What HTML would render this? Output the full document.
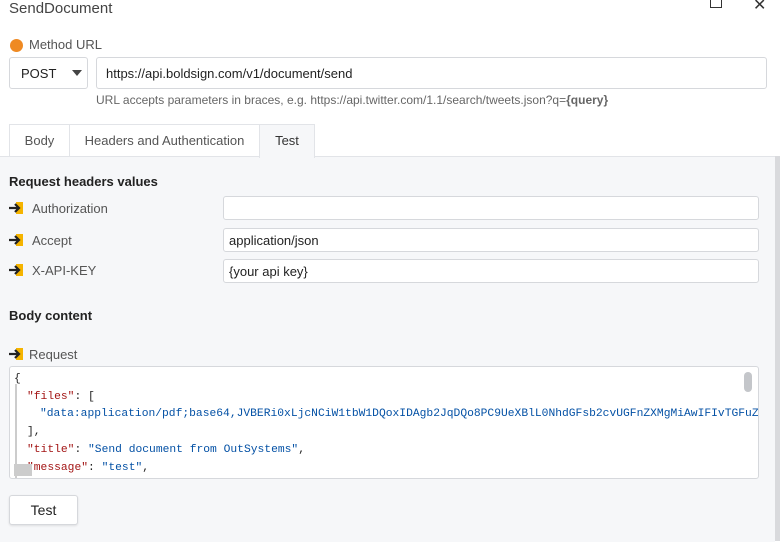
<!DOCTYPE html>
<html><head><style>
body{margin:0;width:780px;height:541px;background:#fff;font-family:"Liberation Sans",sans-serif;position:relative;overflow:hidden;color:#333}
.a{position:absolute}
.inp{position:absolute;background:#fff;border:1px solid #d6d8dc;border-radius:3px;box-sizing:border-box;font-size:13px;color:#222}
.ic{position:absolute;width:16px;height:14px}
.lbl{position:absolute;font-size:13px;color:#555}
.mono{font-family:"Liberation Mono",monospace;font-size:11.3px;position:absolute;white-space:nowrap;color:#222}
.k{color:#a31515}.s{color:#0451a5}
</style></head><body>
<div class="a" style="left:9px;top:0;font-size:15px;color:#444">SendDocument</div>
<div class="a" style="left:710px;top:-4px;width:10px;height:11px;border:1px solid #333;border-top:none"></div>
<div class="a" style="left:753px;top:-5px;font-size:16px;color:#333">✕</div>
<div class="a" style="left:10px;top:39px;width:13px;height:13px;border-radius:50%;background:#ef8a23"></div>
<div class="lbl" style="left:29px;top:37px;font-size:13px">Method URL</div>
<div class="inp" style="left:9px;top:57px;width:79px;height:32px;padding:8px 11px">POST<span style="position:absolute;left:62px;top:12px;border:5px solid transparent;border-top:6px solid #444;border-bottom:none"></span></div>
<div class="inp" style="left:96px;top:57px;width:671px;height:32px;padding:8px 9px">https://api.boldsign.com/v1/document/send</div>
<div class="a" style="left:96px;top:93px;font-size:12px;color:#666">URL accepts parameters in braces, e.g. https://api.twitter.com/1.1/search/tweets.json?q=<b>{query}</b></div>
<div class="a" style="left:0;top:156px;width:775px;height:385px;background:#f6f7f9;border-top:1px solid #e2e4e8"></div>
<div class="a" style="left:775px;top:156px;width:5px;height:385px;background:#d9dadd"></div>
<div class="a" style="left:9px;top:124px;width:61px;height:32px;border:1px solid #e2e4e8;border-bottom:none;box-sizing:border-box;font-size:13px;color:#555;text-align:center;line-height:32px;background:#fff">Body</div>
<div class="a" style="left:70px;top:124px;width:190px;height:32px;border:1px solid #e2e4e8;border-left:none;border-bottom:none;box-sizing:border-box;font-size:13px;color:#555;text-align:center;line-height:32px;background:#fff">Headers and Authentication</div>
<div class="a" style="left:259px;top:124px;width:56px;height:34px;border:1px solid #e2e4e8;border-bottom:none;box-sizing:border-box;font-size:13px;color:#333;text-align:center;line-height:32px;background:#f6f7f9">Test</div>
<div class="a" style="left:9px;top:174px;font-size:13px;font-weight:bold;color:#222">Request headers values</div>
<svg width="0" height="0" style="position:absolute"><defs><symbol id="ar" viewBox="0 0 16 14"><rect x="8" y="1" width="7" height="12" fill="#f5b400"/><path d="M1 7h10M7 3l4 4-4 4" stroke="#222" stroke-width="2.2" fill="none"/></symbol></defs></svg>
<svg class="ic" style="left:8px;top:201px"><use href="#ar"/></svg>
<div class="lbl" style="left:32px;top:201px">Authorization</div>
<div class="inp" style="left:223px;top:196px;width:536px;height:24px"></div>
<svg class="ic" style="left:8px;top:233px"><use href="#ar"/></svg>
<div class="lbl" style="left:32px;top:233px">Accept</div>
<div class="inp" style="left:223px;top:228px;width:536px;height:24px;padding:4px 5px">application/json</div>
<svg class="ic" style="left:8px;top:263px"><use href="#ar"/></svg>
<div class="lbl" style="left:32px;top:263px">X-API-KEY</div>
<div class="inp" style="left:223px;top:259px;width:536px;height:24px;padding:4px 5px">{your api key}</div>
<div class="a" style="left:9px;top:308px;font-size:13px;font-weight:bold;color:#222">Body content</div>
<svg class="ic" style="left:8px;top:347px"><use href="#ar"/></svg>
<div class="lbl" style="left:29px;top:347px">Request</div>
<div class="inp" style="left:9px;top:366px;width:750px;height:113px;overflow:hidden">
<div class="a" style="left:734px;top:5px;width:8px;height:20px;border-radius:4px;background:#c4c6ca"></div>
<div class="a" style="left:5px;top:17px;width:2px;height:95px;background:#ccc"></div>
<div class="mono" style="left:4px;top:6px">{</div>
<div class="mono" style="left:17px;top:24px"><span class="k">"files"</span>: [</div>
<div class="mono" style="left:30px;top:41px"><span class="s">"data:application/pdf;base64,JVBERi0xLjcNCiW1tbW1DQoxIDAgb2JqDQo8PC9UeXBlL0NhdGFsb2cvUGFnZXMgMiAwIFIvTGFuZyhl</span></div>
<div class="mono" style="left:17px;top:59px">],</div>
<div class="mono" style="left:17px;top:77px"><span class="k">"title"</span>: <span class="s">"Send document from OutSystems"</span>,</div>
<div class="mono" style="left:17px;top:95px"><span class="k">"message"</span>: <span class="s">"test"</span>,</div>
<div class="a" style="left:4px;top:97px;width:18px;height:12px;background:#ccc"></div>
</div>
<div class="a" style="left:9px;top:495px;width:69px;height:30px;background:#fff;border:1px solid #d6d8dc;border-radius:3px;box-sizing:border-box;text-align:center;line-height:28px;font-size:14px;color:#222;box-shadow:0 1px 2px rgba(0,0,0,.1)">Test</div>
</body></html>
